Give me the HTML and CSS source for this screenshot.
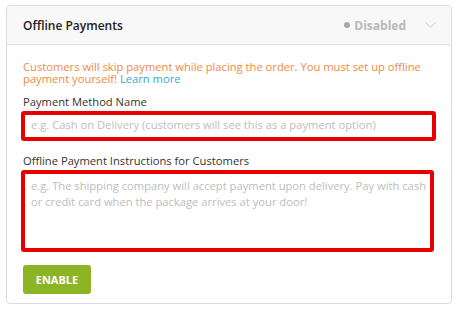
FILE: index.html
```html
<!DOCTYPE html>
<html>
<head>
<meta charset="utf-8">
<link rel="stylesheet" href="styles.css">
</head>
<body>
<div class="card">
  <div class="card-header">
    <span class="title">Offline Payments</span>
    <span class="status"><span class="dot"></span>Disabled</span>
    <svg class="chevron" width="11" height="6" viewBox="0 0 11 6"><path d="M0.5 0.5 L5.5 5.2 L10.5 0.5" fill="none" stroke="#c8c8c8" stroke-width="1"/></svg>
  </div>
  <div class="card-body">
    <p class="notice">Customers will skip payment while placing the order. You must set up offline payment yourself! <a class="link" href="#">Learn more</a></p>
    <label class="label label-first">Payment Method Name</label>
    <div class="field field-input">e.g. Cash on Delivery (customers will see this as a payment option)</div>
    <label class="label label-second">Offline Payment Instructions for Customers</label>
    <div class="field field-area">e.g. The shipping company will accept payment upon delivery. Pay with cash or credit card when the package arrives at your door!</div>
    <button class="btn">ENABLE</button>
  </div>
</div>
</body>
</html>
```
FILE: styles.css
```css
html, body {
  margin: 0;
  padding: 0;
  background: #fff;
  font-family: "Open Sans", "Liberation Sans", sans-serif;
}
.card {
  margin: 5px 0 0 6px;
  width: 444px;
  height: 297px;
  border: 1px solid #dcdcdc;
  border-radius: 4px;
  background: #fff;
  overflow: hidden;
}
.card-header {
  height: 38px;
  background: #f8f8f8;
  border-bottom: 1px solid #e2e2e2;
  display: flex;
  align-items: center;
  padding: 0 15px 0 16px;
}
.title {
  font-size: 12px;
  font-weight: 600;
  color: #222;
  flex: 1;
}
.status {
  display: flex;
  align-items: center;
  font-size: 12px;
  font-weight: 700;
  color: #b9b9b9;
}
.dot {
  width: 6px;
  height: 6px;
  border-radius: 50%;
  background: #a9a9a9;
  margin-right: 4px;
}
.chevron {
  margin-left: 19px;
}
.card-body {
  padding: 16px 16px 0 16px;
}
.notice {
  margin: 0;
  font-size: 11.2px;
  line-height: 12px;
  color: #ef8a3f;
}
.link {
  color: #3aa3cf;
  text-decoration: none;
}
.label {
  display: block;
  font-size: 11.2px;
  line-height: 14px;
  color: #333;
}
.label-first {
  margin-top: 10px;
}
.label-second {
  margin-top: 13px;
}
.field {
  box-sizing: border-box;
  margin-left: -2px;
  border: 4px solid #e60000;
  border-radius: 3px;
  font-size: 11.2px;
  color: #bdbdbd;
  padding: 0 0 0 6px;
}
.field-input {
  width: 415px;
  height: 30px;
  line-height: 20px;
  margin-top: 2px;
}
.field-area {
  width: 413px;
  height: 82px;
  margin-top: 2px;
  padding-top: 4px;
  line-height: 16px;
}
.btn {
  display: block;
  margin-top: 13px;
  width: 68px;
  height: 29px;
  border: none;
  border-radius: 3px;
  background: #8db425;
  color: #fff;
  font-family: "Open Sans", "Liberation Sans", sans-serif;
  font-size: 11px;
  font-weight: 700;
  padding: 0;
}
```
